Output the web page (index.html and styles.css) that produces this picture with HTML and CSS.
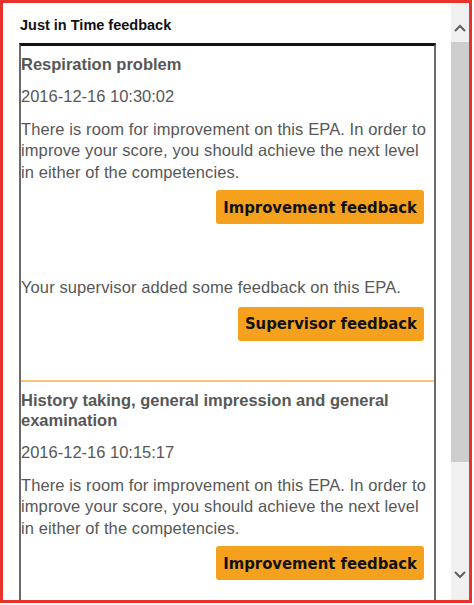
FILE: index.html
```html
<!DOCTYPE html>
<html lang="en">
<head>
    <meta charset="UTF-8">
    <meta name="viewport" content="width=device-width, initial-scale=1.0">
    <title>Just in Time feedback</title>
    <link rel="stylesheet" href="styles.css">
</head>
<body>
    <div class="panel">
        <div class="panel-body">
            <h1 class="panel-title">Just in Time feedback</h1>
            <div class="feedback-list">
                <div class="feedback-item">
                    <h2>Respiration problem</h2>
                    <div class="feedback-date">2016-12-16 10:30:02</div>
                    <p>There is room for improvement on this EPA. In order to improve your score, you should achieve the next level in either of the competencies.</p>
                    <div class="actions"><button class="btn-feedback">Improvement feedback</button></div>
                    <p class="supervisor-note">Your supervisor added some feedback on this EPA.</p>
                    <div class="actions"><button class="btn-feedback">Supervisor feedback</button></div>
                </div>
                <div class="feedback-item">
                    <h2>History taking, general impression and general examination</h2>
                    <div class="feedback-date">2016-12-16 10:15:17</div>
                    <p>There is room for improvement on this EPA. In order to improve your score, you should achieve the next level in either of the competencies.</p>
                    <div class="actions"><button class="btn-feedback">Improvement feedback</button></div>
                </div>
            </div>
        </div>
        <div class="scrollbar">
            <div class="scroll-btn scroll-up">
                <svg width="12" height="8" viewBox="0 0 12 8"><path d="M1 7 L6 2 L11 7" fill="none" stroke="#606060" stroke-width="2"/></svg>
            </div>
            <div class="scroll-thumb"></div>
            <div class="scroll-track"></div>
            <div class="scroll-btn scroll-down">
                <svg width="12" height="8" viewBox="0 0 12 8"><path d="M1 1 L6 6 L11 1" fill="none" stroke="#606060" stroke-width="2"/></svg>
            </div>
        </div>
    </div>
</body>
</html>
```
FILE: styles.css
```css
:root {
    --frame-red: #e8322c; --text-grey: #575757;
    --btn-orange: #f5a11e; --line-orange: #f9c47c;
    --scroll-track: #f0f0f0; --scroll-thumb: #cdcdcd;
}
body {
    margin: 0; background: #fff;
    font-family: "Liberation Sans", Arial, sans-serif;
}
.panel {
    display: flex; width: 472px; height: 603px;
    box-sizing: border-box; border: 3px solid var(--frame-red);
    background: #fff; overflow: hidden;
}
.panel-body { flex: 1; overflow: hidden; padding: 0 15px 0 16px; }
.panel-title {
    margin: 0; padding: 14px 0 0 1px; height: 26px;
    font-size: 14.5px; font-weight: bold; color: #111;
}
.feedback-list {
    border-top: 3px solid #111;
    border-left: 2px solid #6b6b6b; border-right: 2px solid #6b6b6b;
}
.feedback-item {
    padding: 8px 6px 39px 0;
    border-bottom: 2px solid var(--line-orange);
    color: var(--text-grey);
}
.feedback-item h2 {
    margin: 0 0 11px; font-size: 16.5px; line-height: 20.5px; font-weight: bold;
}
.feedback-date { font-size: 16.5px; line-height: 21px; margin-bottom: 12px; }
.feedback-item p {
    margin: 0 0 7px; font-size: 16.5px; line-height: 21.5px; letter-spacing: 0.1px;
}
.feedback-item p.supervisor-note { margin-top: 53px; margin-bottom: 8px; }
.actions { display: flex; justify-content: flex-end; padding-right: 4px; }
.btn-feedback {
    height: 34px; padding: 0 7px; border: none; border-radius: 3px;
    background: var(--btn-orange); color: #111;
    font-family: "DejaVu Sans Condensed", "DejaVu Sans", sans-serif;
    font-weight: bold; font-size: 16.5px; cursor: pointer;
}
.scrollbar {
    width: 18px; display: flex; flex-direction: column;
    background: var(--scroll-track);
}
.scroll-btn { height: 39px; display: flex; justify-content: center; }
.scroll-up { align-items: flex-start; padding-top: 21px; box-sizing: border-box; }
.scroll-down { align-items: flex-end; padding-bottom: 21px; box-sizing: border-box; }
.scroll-thumb { height: 420px; background: var(--scroll-thumb); }
.scroll-track { flex: 1; }
```
